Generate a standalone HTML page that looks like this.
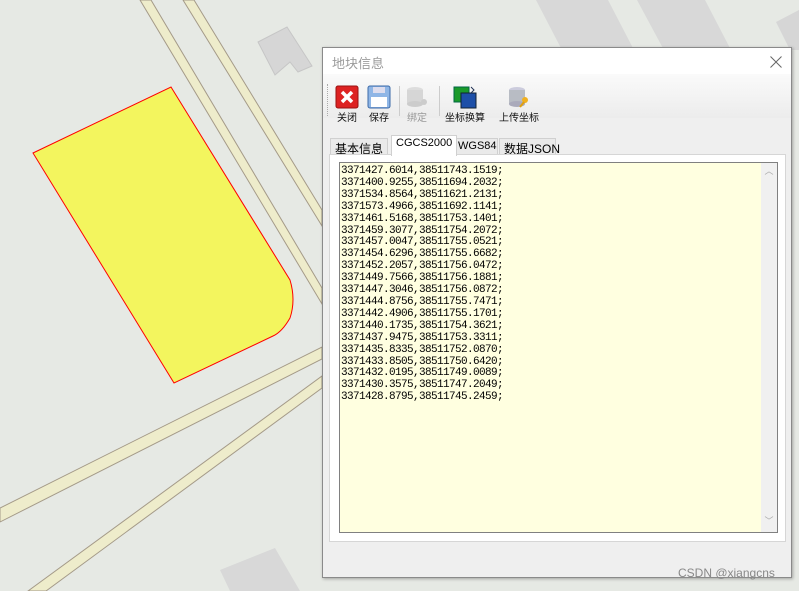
<!DOCTYPE html>
<html><head><meta charset="utf-8"><style>
*{margin:0;padding:0;box-sizing:border-box}
body{width:799px;height:591px;overflow:hidden;background:#e6e9e4;position:relative;font-family:"Liberation Sans","Noto Sans CJK SC",sans-serif}
#map{position:absolute;left:0;top:0}
.dlg{position:absolute;left:322px;top:47px;width:470px;height:531px;background:#efefef;border:1px solid #8a8a8a;box-shadow:1px 1px 3px rgba(0,0,0,.3)}
.title{height:26px;background:#fff;color:#9a9a9a;font-size:13px;padding:5px 0 0 9px}
.x{position:absolute;right:9px;top:8px}
.tb{height:44px;background:linear-gradient(#fafafa,#ececec);position:relative}
.btn{position:absolute;top:11px;text-align:center;font-size:10px;color:#111}
.btn svg{display:block;margin:0 auto}
.sep{position:absolute;top:12px;width:1px;height:30px;background:#ccc}
.tab{position:absolute;top:90px;height:18px;font-size:12px;border:1px solid #d0d0d0;border-bottom:none;background:#eaeaea;padding:1px 4px;white-space:nowrap}
.panel{position:absolute;left:6px;top:106px;width:457px;height:388px;background:#fff;border:1px solid #d6d6d6}
.ta{position:absolute;left:9px;top:7px;width:439px;height:371px;border:1px solid #808080;background:#ffffe0;font-family:"Liberation Mono",monospace;font-size:11px;letter-spacing:-0.6px;line-height:11.9px;padding:3px 0 0 1px;color:#000;white-space:pre}
.sb{position:absolute;right:0;top:0;width:16px;height:100%;background:#f0f0f0;color:#aaa;font-size:9px;text-align:center;letter-spacing:0}
.wm{position:absolute;left:678px;top:566px;font-size:12px;color:#888}
</style></head><body>
<svg id="map" width="799" height="591">
<polygon points="536,0 608,0 635,52 563,52" fill="#d8d8d8"/>
<polygon points="637,0 705,0 732,52 665,52" fill="#d8d8d8"/>
<polygon points="776,22 799,10 799,50 790,50" fill="#d6d6d6"/>
<polygon points="258,42 287,27 312,66 298,72 290,62 275,75" fill="#d6d6d6" stroke="#c6c6c6"/>
<polygon points="220,570 275,548 300,591 230,591" fill="#d8d8d8"/>
<g stroke="#a49a88" stroke-width="1" fill="#eeeccb">
<polygon points="140,0 151,0 322,288 322,304"/>
<polygon points="183,0 194,0 322,210 322,226"/>
<polygon points="0,508 322,347 322,359 0,522"/>
<polygon points="28,591 322,376 322,388 46,591"/>
</g>
<path d="M33,153 L171,87 L290,280 Q296,300 290,318 Q282,332 273,336 L174,383 Z" fill="#f3f55e" stroke="#f00" stroke-width="1"/>
</svg>
<div class="dlg">
<div class="title">地块信息<svg class="x" width="12" height="12"><path d="M0.5,0.5L11.5,11.5M11.5,0.5L0.5,11.5" stroke="#666" stroke-width="1"/></svg></div>
<div class="tb">
<div style="position:absolute;left:4px;top:10px;height:32px;border-left:1px dotted #aaa"></div>
<div class="btn" style="left:10px;width:28px"><svg width="24" height="24"><rect x="1" y="1" width="22" height="22" rx="2" fill="#d22" stroke="#911"/><path d="M7,7L17,17M17,7L7,17" stroke="#fff" stroke-width="3.5"/></svg>关闭</div>
<div class="btn" style="left:44px;width:24px"><svg width="24" height="24"><rect x="1" y="1" width="22" height="22" rx="2" fill="#8fb6e6" stroke="#3c6aa8"/><rect x="6" y="2" width="12" height="6" fill="#dde"/><rect x="4" y="12" width="16" height="10" fill="#fff"/></svg>保存</div>
<div class="sep" style="left:76px"></div>
<div class="btn" style="left:82px;width:24px;color:#999"><svg width="24" height="24"><ellipse cx="10" cy="5" rx="8" ry="3" fill="#ddd"/><rect x="2" y="5" width="16" height="14" fill="#d6d6d6"/><ellipse cx="10" cy="19" rx="8" ry="3" fill="#ccc"/><circle cx="19" cy="17" r="3" fill="#ccc"/></svg>绑定</div>
<div class="sep" style="left:116px"></div>
<div class="btn" style="left:120px;width:44px"><svg width="24" height="24"><rect x="1" y="2" width="15" height="15" fill="#1a9a2a" stroke="#064"/><rect x="8" y="8" width="15" height="15" fill="#1d4fa8" stroke="#123"/><path d="M18,2 l3,3 -3,3" stroke="#235" fill="none"/></svg>坐标换算</div>
<div class="btn" style="left:174px;width:44px"><svg width="24" height="24"><ellipse cx="10" cy="5" rx="8" ry="3" fill="#ccd"/><rect x="2" y="5" width="16" height="14" fill="#b8bcc4"/><ellipse cx="10" cy="19" rx="8" ry="3" fill="#aab"/><circle cx="18" cy="15" r="3" fill="#f0b020"/><path d="M17,17 l-4,5" stroke="#e0a010" stroke-width="2"/></svg>上传坐标</div>
</div>
<div class="tab" style="left:7px;top:90px">基本信息</div>
<div class="tab" style="left:68px;top:87px;height:21px;background:#fff;font-size:11px;z-index:2">CGCS2000</div>
<div class="tab" style="left:130px;font-size:11px;width:45px">WGS84</div>
<div class="tab" style="left:176px;width:57px;font-size:12px">数据JSON</div>
<div class="panel"><div class="ta">3371427.6014,38511743.1519;
3371400.9255,38511694.2032;
3371534.8564,38511621.2131;
3371573.4966,38511692.1141;
3371461.5168,38511753.1401;
3371459.3077,38511754.2072;
3371457.0047,38511755.0521;
3371454.6296,38511755.6682;
3371452.2057,38511756.0472;
3371449.7566,38511756.1881;
3371447.3046,38511756.0872;
3371444.8756,38511755.7471;
3371442.4906,38511755.1701;
3371440.1735,38511754.3621;
3371437.9475,38511753.3311;
3371435.8335,38511752.0870;
3371433.8505,38511750.6420;
3371432.0195,38511749.0089;
3371430.3575,38511747.2049;
3371428.8795,38511745.2459;<div class="sb"><div style="padding-top:4px">︿</div><div style="position:absolute;bottom:3px;width:100%">﹀</div></div></div></div>
</div>
<div class="wm">CSDN @xiangcns</div>
</body></html>
